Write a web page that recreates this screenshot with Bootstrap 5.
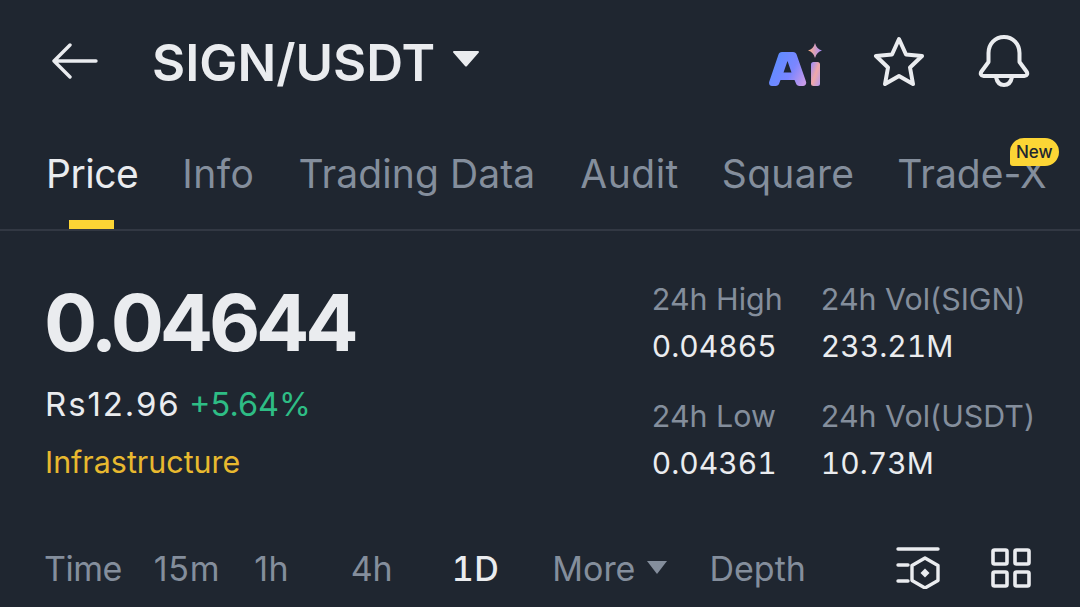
<!doctype html>
<html lang="en"><head><meta charset="utf-8"><title>SIGN/USDT</title>
<link href="https://cdn.jsdelivr.net/npm/bootstrap@5.3.0/dist/css/bootstrap.min.css" rel="stylesheet">
<style>
html,body{height:607px;overflow:hidden}
body{background:#1f2630;color:#eaecef;font-family:Inter,"Noto Sans",sans-serif;width:1080px}
.hdr{height:122px;padding:0 50px 0 52px}
.back{width:46px;height:36px;margin-right:54px;margin-top:0}
.ttl{font-size:51px;font-weight:600;letter-spacing:0;line-height:1;margin:2px 0 0}
.caret{width:28px;height:20px;margin-left:17px;margin-top:-4px}
.ico-ai{width:54px;height:44px;margin-top:8px}
.ico-star{width:52px;height:50px;margin-left:50px}
.ico-bell{width:52px;height:54px;margin-left:53px}
.tabs{height:109px;border-bottom:2px solid #323843;margin:0;list-style:none;padding:0 0 0 46px}
.tabi{font-size:39px;color:#848e9c;line-height:1;padding-top:32px;position:relative}
.tabi.on{color:#eaecef;letter-spacing:-.5px}
.tabi.on::after{content:"";position:absolute;left:23px;width:45px;height:9px;background:#fcd535;top:98px}
.g-info{margin-left:44px;letter-spacing:.5px}
.g-trade{margin-left:44px;letter-spacing:.1px}
.g-audit{margin-left:45px;letter-spacing:.5px}
.g-square{margin-left:43px;letter-spacing:.3px}
.g-tx{margin-left:43px}
.newb{position:absolute;top:16px;right:-12px;background:#fcd535;color:#202630;font-size:17px;font-weight:500;line-height:28px;height:28px;padding:0 6px;border-radius:14px 14px 14px 3px;letter-spacing:0}
.stats{padding:59px 46px 0 45px}
.price{font-size:79px;font-weight:700;line-height:1;letter-spacing:-4.2px;margin:-7px 0 0 -1px}
.sub{font-size:33px;line-height:1;margin-top:26px;font-weight:400}
.rs{letter-spacing:1.9px}
.up{color:#2ebd85;font-size:32.500px;margin-left:-1px}
.cat{color:#e8b92f;font-size:30.4px;line-height:1;margin-top:25px}
.kv{font-size:30.4px;line-height:1;color:#848e9c;white-space:nowrap}
.kv b{display:block;font-weight:400;color:#eaecef;margin-top:16.75px;font-size:30px;font-variant-numeric:tabular-nums}
.kvgrid{display:grid;grid-template-columns:169px auto;row-gap:39.75px;margin-top:-6px;margin-right:-1px}
.tools{margin-top:56px;padding:0 48px 0 44px;height:60px;font-size:34px;color:#848e9c}
.tools span{line-height:1;margin-top:10px}
.tools .act{color:#eaecef;font-weight:500;letter-spacing:.5px;font-variant-numeric:tabular-nums}
.mcaret{width:22px;height:14px;margin-left:11px;margin-top:8px}
.tm{letter-spacing:-.5px}
.t1{margin-left:32px;letter-spacing:.7px}
.t2{margin-left:34px;letter-spacing:.5px}
.t3{margin-left:61.500px}
.t4{margin-left:59px}
.t5{margin-left:53px}
.t6{margin-left:41px}
.tico{margin-top:7px}
.i1{width:44px;height:42px}
.i2{width:42px;height:42px;margin-left:50px}
</style></head><body>
<header class="hdr d-flex align-items-center">
<svg class="back" viewBox="0 0 46 36" fill="none" stroke="#eaecef" stroke-width="3.4" stroke-linecap="round" stroke-linejoin="round"><path d="M44 18H2M18 2 2 18l16 16"/></svg>
<h1 class="ttl">SIGN/USDT</h1>
<svg class="caret" viewBox="0 0 28 20"><path d="M2 2h24a1 1 0 0 1 .8 1.6L15 17a1.400 1.400 0 0 1-2 0L1.200 3.600A1 1 0 0 1 2 2z" fill="#eaecef"/></svg>
<div class="ms-auto d-flex align-items-center">
<svg class="ico-ai" viewBox="0 0 54 44"><defs><linearGradient id="g" x1="0" x2="1" y1="0.300" y2="0.800"><stop offset="0" stop-color="#5a8dff"/><stop offset=".6" stop-color="#7b86ff"/><stop offset="1" stop-color="#c79ae8"/></linearGradient><linearGradient id="j" x1="0" x2="1" y1="0" y2="1"><stop offset="0" stop-color="#9a8cff"/><stop offset=".5" stop-color="#f0a8a8"/><stop offset="1" stop-color="#b69af0"/></linearGradient><linearGradient id="h" x1="0" x2="1"><stop offset="0" stop-color="#ffb080"/><stop offset="1" stop-color="#a98cff"/></linearGradient></defs><path fill="url(#g)" fill-rule="evenodd" d="M13 9h11c2 0 3 1 3.600 2.500L37 38.500c.8 2.500-.6 4.500-3 4.500h-3.500c-1.800 0-3-1-3.500-2.500L25.500 37h-14l-1.300 3.500C9.700 42 8.500 43 6.700 43H3C.8 43-.5 41 .3 38.500L9.500 11.500C10 10 11 9 13 9zM18.500 18l-4 11.500h8z"/><rect x="42" y="19" width="9" height="24" rx="2.500" fill="url(#j)"/><path fill="url(#h)" d="M46 0q1.500 6 7 7.500-5.500 1.500-7 7.500-1.500-6-7-7.500 5.500-1.500 7-7.500z"/></svg>
<svg class="ico-star" viewBox="0 0 52 50" fill="none" stroke="#eaecef" stroke-width="4" stroke-linejoin="round"><path d="M26 3l7 15.500L49 20 37 31.500l3 16.500L26 40l-14 8 3-16.500L3 20l16-1.500z"/></svg>
<svg class="ico-bell" viewBox="0 0 52 54" fill="none" stroke="#eaecef" stroke-width="4" stroke-linejoin="round"><path d="M26 3c-9 0-15.500 7-15.500 16v9L3.500 37.500c-1.500 2-.5 4.500 2 4.500h41c2.500 0 3.500-2.500 2-4.500L41.500 28v-9C41.500 10 35 3 26 3z"/><path d="M18 43c1 5 4 8 8 8s7-3 8-8"/></svg>
</div>
</header>
<ul class="tabs d-flex">
<li class="tabi on">Price</li>
<li class="tabi g-info">Info</li>
<li class="tabi g-trade">Trading Data</li>
<li class="tabi g-audit">Audit</li>
<li class="tabi g-square">Square</li>
<li class="tabi g-tx">Trade-X<span class="newb">New</span></li>
</ul>
<section class="stats d-flex justify-content-between">
<div>
<div class="price">0.04644</div>
<div class="sub"><span class="rs">Rs12.96</span> <span class="up">+5.64%</span></div>
<div class="cat">Infrastructure</div>
</div>
<div class="kvgrid">
<div class="kv">24h High<b>0.04865</b></div>
<div class="kv">24h Vol(SIGN)<b>233.21M</b></div>
<div class="kv">24h Low<b>0.04361</b></div>
<div class="kv">24h Vol(USDT)<b>10.73M</b></div>
</div>
</section>
<nav class="tools d-flex align-items-center">
<span class="tm">Time</span><span class="t1">15m</span><span class="t2">1h</span><span class="t3">4h</span><span class="t4 act">1D</span><span class="t5">More</span>
<svg class="mcaret" viewBox="0 0 22 14"><path d="M1 0h20L11 13z" fill="#848e9c"/></svg>
<span class="t6">Depth</span>
<div class="ms-auto d-flex align-items-center tico">
<svg class="i1" viewBox="0 0 44 42" fill="none" stroke="#eaecef" stroke-width="3.400" stroke-linecap="round" stroke-linejoin="round"><path d="M2 2h40M2 18h10M2 34h10"/><path d="M29 11l13 7.500v15L29 41l-13-7.500v-15z"/><path d="M29 21.500l4.500 4.500-4.500 4.500-4.500-4.500z" fill="#eaecef" stroke="none"/></svg>
<svg class="i2" viewBox="0 0 42 42" fill="none" stroke="#eaecef" stroke-width="3.600" stroke-linejoin="round"><rect x="3" y="3" width="14" height="14" rx="1.500"/><rect x="25" y="3" width="14" height="14" rx="1.500"/><rect x="3" y="25" width="14" height="14" rx="1.500"/><rect x="25" y="25" width="14" height="14" rx="1.500"/></svg>
</div>
</nav>
</body></html>
